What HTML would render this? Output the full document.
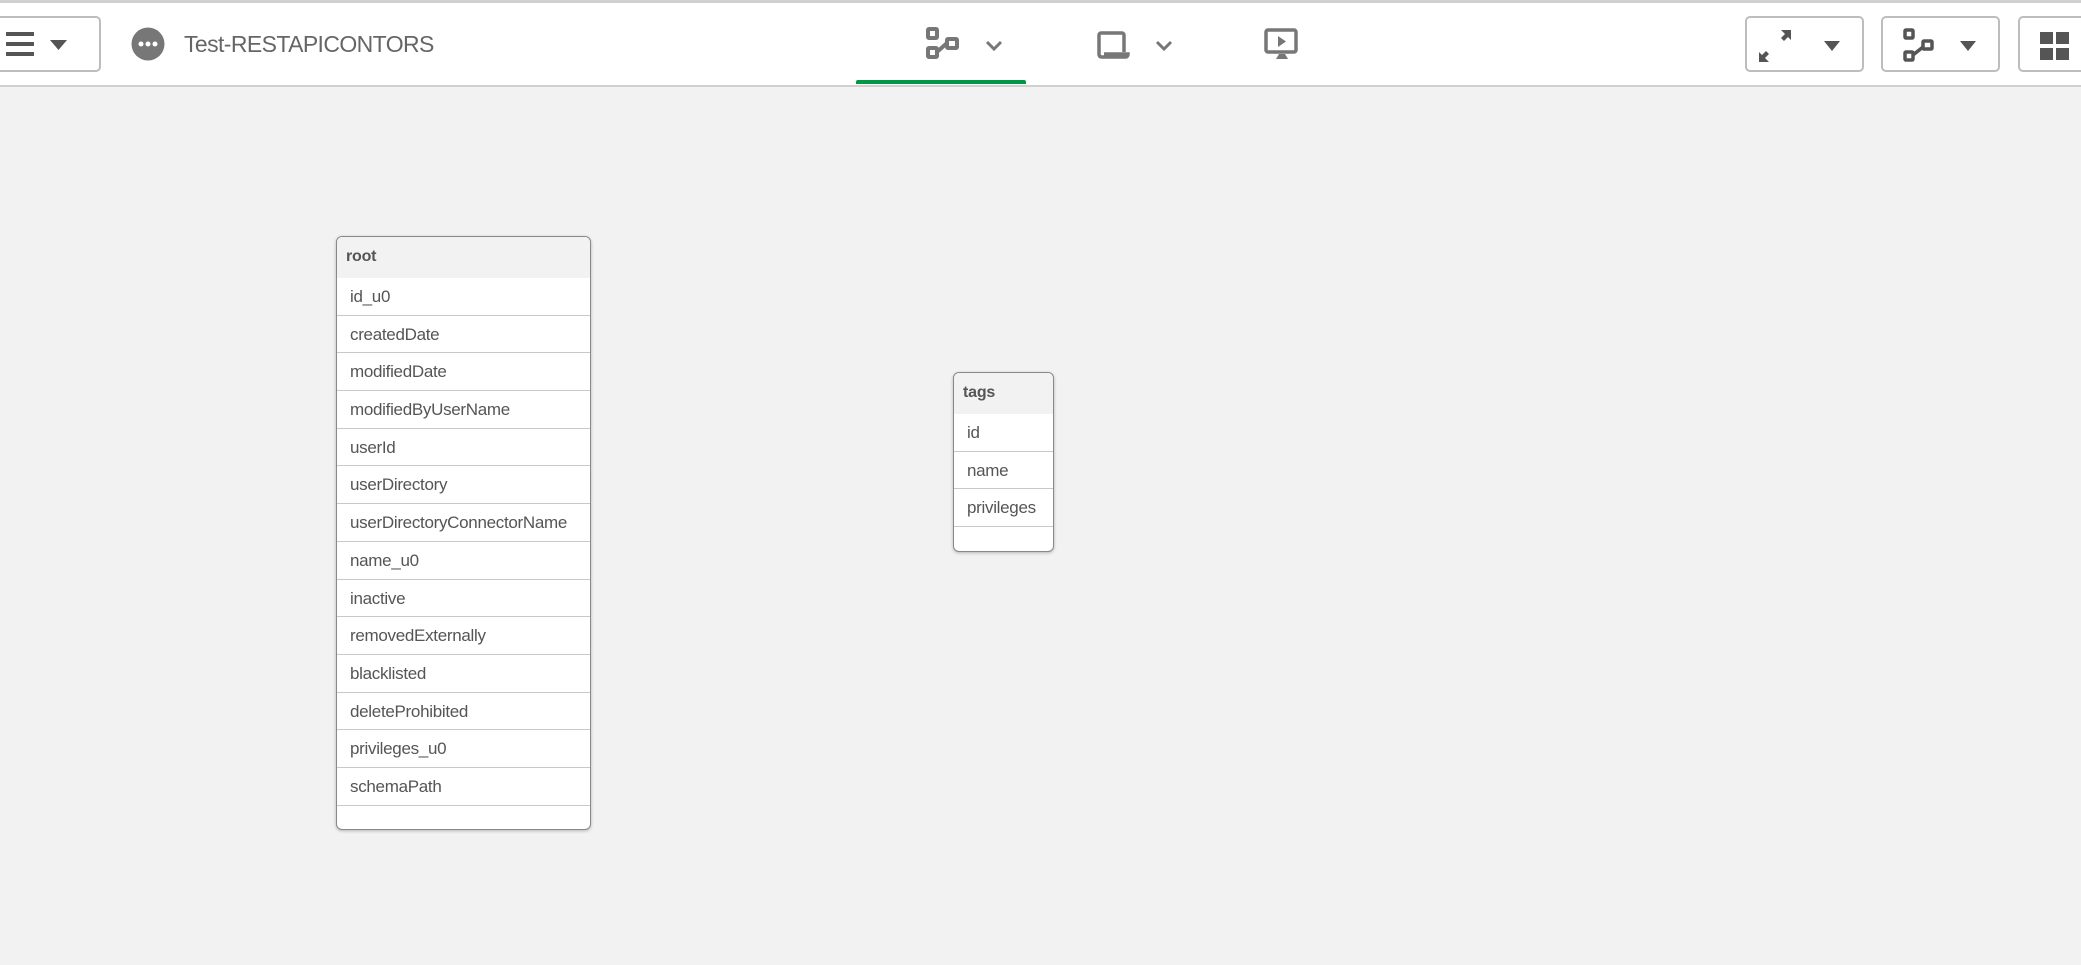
<!DOCTYPE html>
<html><head><meta charset="utf-8"><style>
*{box-sizing:border-box;margin:0;padding:0}
body{width:2081px;height:965px;background:#f2f2f2;font-family:"Liberation Sans",sans-serif;position:relative;overflow:hidden}
.top{position:absolute;left:0;top:0;width:2081px;height:87px;background:#fff;border-top:3px solid #d0d0d0;border-bottom:2px solid #d0d0d0}
.btn{position:absolute;top:16px;height:56px;border:2px solid #bdbdbd;border-radius:5px;background:#fff}
.tbl{position:absolute;background:#fff;border:1px solid #888;border-radius:6px;box-shadow:0 1px 3px rgba(0,0,0,.25);overflow:hidden}
.hd{height:41px;background:#f2f2f2;font-weight:bold;font-size:16px;color:#555;padding:11px 0 0 9px;letter-spacing:-0.2px}
.r{height:37.7px;border-bottom:1px solid #c8c8c8;font-size:17px;color:#555;padding:9px 0 0 13px;white-space:nowrap;letter-spacing:-0.3px}
</style></head><body>
<div class="top">
 <div class="btn" style="left:-10px;width:111px;top:13px">
  <svg width="111" height="56" style="position:absolute;left:0;top:0"><rect x="14" y="14" width="28" height="4" fill="#555"/><rect x="14" y="24" width="28" height="4" fill="#555"/><rect x="14" y="34" width="28" height="4" fill="#555"/><path d="M58 22h17l-8.5 10z" fill="#555"/></svg>
 </div>
 <svg width="36" height="36" style="position:absolute;left:130px;top:23px"><circle cx="18" cy="18" r="16.5" fill="#777"/><circle cx="11" cy="18" r="2.5" fill="#fff"/><circle cx="18" cy="18" r="2.5" fill="#fff"/><circle cx="25" cy="18" r="2.5" fill="#fff"/></svg>
 <div style="position:absolute;left:184px;top:28px;font-size:23px;color:#666;letter-spacing:-0.6px">Test-RESTAPICONTORS</div>
 <svg width="40" height="40" style="position:absolute;left:924px;top:22px" fill="none" stroke="#777" stroke-width="4"><rect x="4" y="4" width="9" height="9" rx="1"/><rect x="4" y="23" width="9" height="9" rx="1"/><rect x="23" y="14" width="10" height="9" rx="1"/><path d="M13 27l10-9"/></svg>
 <svg width="20" height="14" style="position:absolute;left:985px;top:36px" fill="none" stroke="#777" stroke-width="3"><path d="M2 3l7 7 7-7"/></svg>
 <svg width="38" height="30" style="position:absolute;left:1095px;top:27px" fill="none" stroke="#777" stroke-width="3.5"><path d="M4 24V5c0-1 1-2 2-2h21c1 0 2 1 2 2v17"/><path d="M4 24c0 2 1 3 3 3h24c1 0 2-1 2-3H9"/></svg>
 <svg width="20" height="14" style="position:absolute;left:1155px;top:36px" fill="none" stroke="#777" stroke-width="3"><path d="M2 3l7 7 7-7"/></svg>
 <svg width="36" height="32" style="position:absolute;left:1264px;top:25px"><rect x="2" y="2" width="30" height="22" rx="2" fill="none" stroke="#777" stroke-width="3.5"/><path d="M14 8v11l8-5.5z" fill="#777"/><path d="M12 31h12l-3-5h-6z" fill="#777"/></svg>
 <div style="position:absolute;left:856px;top:77px;width:170px;height:4px;background:#009845;border-radius:2px 2px 0 0"></div>
 <div class="btn" style="left:1745px;width:119px;top:13px">
  <svg width="119" height="56" style="position:absolute;left:0;top:0" fill="#555"><path d="M34 12h10v10l-3-3-4 4-3-3 4-4z"/><path d="M22 44h-10v-10l3 3 4-4 3 3-4 4z"/><path d="M77 23h16l-8 10z"/></svg>
 </div>
 <div class="btn" style="left:1881px;width:119px;top:13px">
  <svg width="119" height="56" style="position:absolute;left:0;top:0" fill="none" stroke="#555" stroke-width="3.5"><rect x="22" y="12" width="8" height="8" rx="1"/><rect x="22" y="34" width="8" height="8" rx="1"/><rect x="40" y="23" width="9" height="8" rx="1"/><path d="M30 37l10-8"/><path d="M77 23h16l-8 10z" fill="#555" stroke="none"/></svg>
 </div>
 <div class="btn" style="left:2018px;width:90px;top:13px">
  <svg width="60" height="56" style="position:absolute;left:0;top:0" fill="#555"><rect x="20" y="14" width="13" height="12"/><rect x="36" y="14" width="13" height="12"/><rect x="20" y="30" width="13" height="12"/><rect x="36" y="30" width="13" height="12"/></svg>
 </div>
</div>

<div class="tbl" style="left:336px;top:236px;width:255px;height:594px">
 <div class="hd">root</div>
 <div class="r">id_u0</div><div class="r">createdDate</div><div class="r">modifiedDate</div><div class="r">modifiedByUserName</div><div class="r">userId</div><div class="r">userDirectory</div><div class="r">userDirectoryConnectorName</div><div class="r">name_u0</div><div class="r">inactive</div><div class="r">removedExternally</div><div class="r">blacklisted</div><div class="r">deleteProhibited</div><div class="r">privileges_u0</div><div class="r">schemaPath</div>
</div>

<div class="tbl" style="left:953px;top:372px;width:101px;height:180px">
 <div class="hd">tags</div>
 <div class="r">id</div><div class="r">name</div><div class="r">privileges</div>
</div>
</body></html>
